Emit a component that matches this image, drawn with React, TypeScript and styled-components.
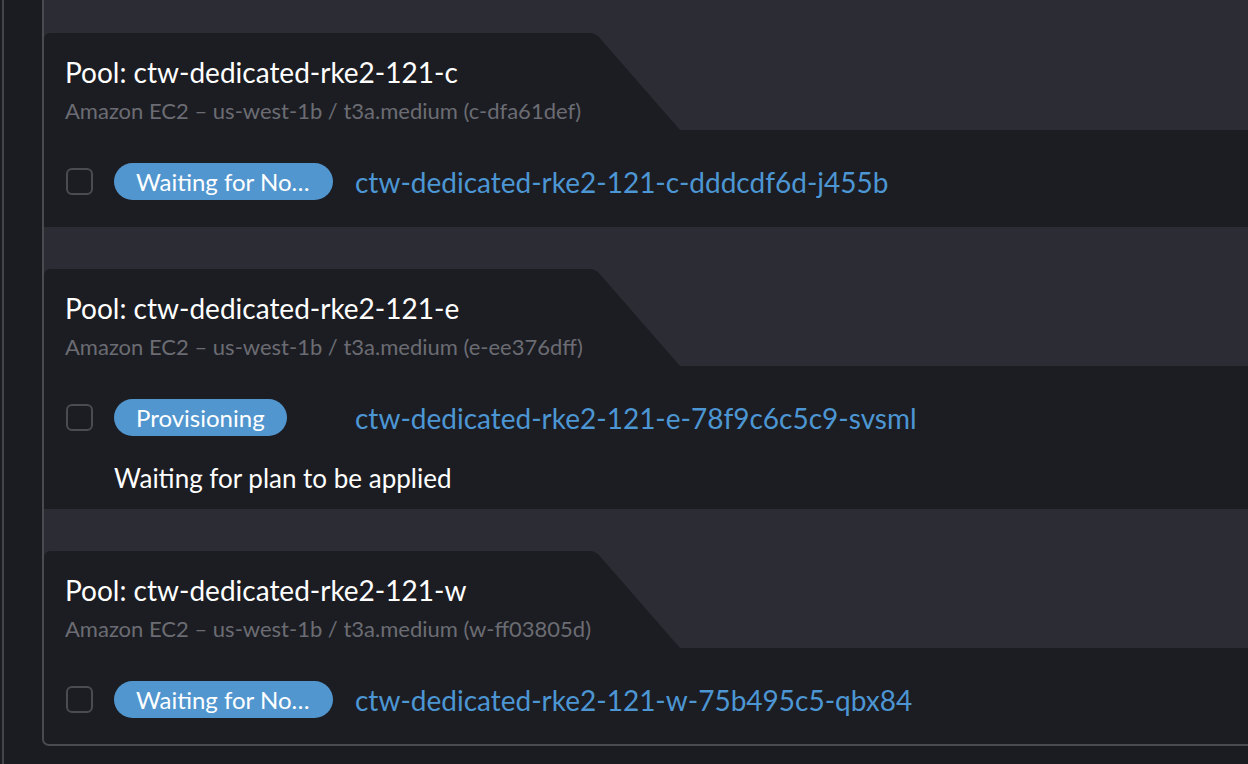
import React from "react";
import styled, { createGlobalStyle } from "styled-components";

const GlobalStyle = createGlobalStyle`
    html, body {
        margin: 0;
        padding: 0;
        background: #1b1c21;
        overflow: hidden;
        font-family: Lato, "Noto Sans", sans-serif;
    }
`;

const Page = styled.div`
    display: flex;
    width: 100vw;
    height: 764px;
    background: #1b1c21;
`;

const Rail = styled.div`
    flex: 0 0 38px;
    margin-left: 2px;
    border-left: 2px solid #44454b;
`;

const Frame = styled.div`
    flex: 1;
    margin-right: -12px;
    height: 746px;
    display: flex;
    flex-direction: column;
    gap: 42px;
    padding-top: 33px;
    box-sizing: border-box;
    background: #2c2c35;
    border-left: 2px solid #4a4b51;
    border-bottom: 2px solid #4a4b51;
    border-bottom-left-radius: 7px;
    overflow: hidden;
`;

const Card = styled.section`
    display: flex;
    flex-direction: column;
`;

const CardHead = styled.div`
    width: 636px;
    height: 97px;
    box-sizing: border-box;
    padding: 22px 0 0 21px;
    background: #1c1d22;
    border-top-left-radius: 6px;
    clip-path: polygon(0 0, 548px 0, 554px 3px, 636px 100%, 0 100%);
`;

const Title = styled.h3`
    margin: 0;
    font-size: 28px;
    font-weight: 400;
    line-height: 34px;
    color: #ffffff;
    white-space: nowrap;
`;

const Subtitle = styled.div`
    margin-top: 9px;
    font-size: 22px;
    line-height: 26px;
    color: #6b6c73;
    white-space: nowrap;
`;

const CardBody = styled.div<{ $tall?: boolean }>`
    background: #1c1d22;
    padding: 33px 22px ${(p) => (p.$tall ? "16px" : "27px")};
`;

const NodeRow = styled.div`
    display: grid;
    grid-template-columns: 27px 220px auto;
    column-gap: 21px;
    align-items: center;
    height: 37px;
`;

const Check = styled.span`
    width: 27px;
    height: 27px;
    box-sizing: border-box;
    border: 2px solid #4b4c52;
    border-radius: 6px;
`;

const Badge = styled.span`
    justify-self: start;
    max-width: 219px;
    box-sizing: border-box;
    height: 37px;
    line-height: 37px;
    padding: 0 22px;
    border-radius: 19px;
    background: #5196cf;
    color: #ffffff;
    font-size: 24px;
    white-space: nowrap;
    overflow: hidden;
    text-overflow: ellipsis;
`;

const NodeLink = styled.a`
    font-size: 28px;
    color: #4c96d4;
    text-decoration: none;
    white-space: nowrap;
`;

const Message = styled.div`
    margin: 27px 0 0 48px;
    font-size: 26px;
    line-height: 30px;
    color: #ffffff;
`;

type Pool = {
    name: string;
    spec: string;
    state: string;
    node: string;
    message?: string;
};

const pools: Pool[] = [
    {
        name: "ctw-dedicated-rke2-121-c",
        spec: "c-dfa61def",
        state: "Waiting for NodeRef",
        node: "ctw-dedicated-rke2-121-c-dddcdf6d-j455b",
    },
    {
        name: "ctw-dedicated-rke2-121-e",
        spec: "e-ee376dff",
        state: "Provisioning",
        node: "ctw-dedicated-rke2-121-e-78f9c6c5c9-svsml",
        message: "Waiting for plan to be applied",
    },
    {
        name: "ctw-dedicated-rke2-121-w",
        spec: "w-ff03805d",
        state: "Waiting for NodeRef",
        node: "ctw-dedicated-rke2-121-w-75b495c5-qbx84",
    },
];

export default function App() {
    return (
        <>
            <GlobalStyle />
            <Page>
                <Rail />
                <Frame>
                    {pools.map((pool) => (
                        <Card key={pool.name}>
                            <CardHead>
                                <Title>Pool: {pool.name}</Title>
                                <Subtitle>
                                    Amazon EC2 – us-west-1b / t3a.medium ({pool.spec})
                                </Subtitle>
                            </CardHead>
                            <CardBody $tall={!!pool.message}>
                                <NodeRow>
                                    <Check />
                                    <Badge title={pool.state}>{pool.state}</Badge>
                                    <NodeLink href="#">{pool.node}</NodeLink>
                                </NodeRow>
                                {pool.message && <Message>{pool.message}</Message>}
                            </CardBody>
                        </Card>
                    ))}
                </Frame>
            </Page>
        </>
    );
}
